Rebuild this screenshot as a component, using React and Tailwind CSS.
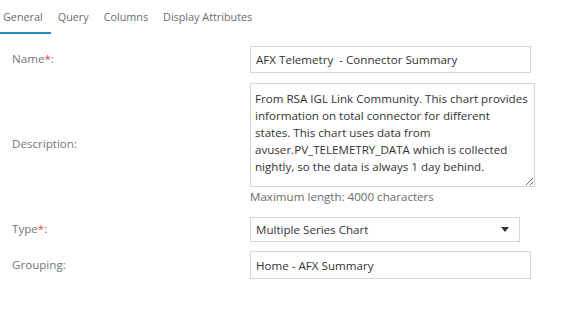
import { useState } from "react";

const tabs = ["General", "Query", "Columns", "Display Attributes"];

const description =
  "From RSA IGL Link Community. This chart provides\ninformation on total connector for different\nstates. This chart uses data from\navuser.PV_TELEMETRY_DATA which is collected\nnightly, so the data is always 1 day behind.";

function Label({ children, required }) {
  return (
    <label className="block text-[11.6px] text-[#767676] leading-[17px] -translate-y-[1px]">
      {children}
      {required && <span className="text-[#e8453c]">*</span>}:
    </label>
  );
}

export default function App() {
  const [active, setActive] = useState("General");
  const [name, setName] = useState("AFX Telemetry  - Connector Summary");
  const [desc, setDesc] = useState(description);
  const [group, setGroup] = useState("Home - AFX Summary");

  return (
    <div className="w-[572px] h-[309px] bg-white font-['Open_Sans',sans-serif] text-[#333]">
      <div className="flex items-start h-[34px]">
        {tabs.map((t, i) => {
          const on = t === active;
          return (
            <div
              key={t}
              onClick={() => setActive(t)}
              className={
                (i === 0 ? "pl-[3px] pr-[8px] " : "ml-[7px] pr-[8px] ") +
                "pt-[9px] pb-[8px] cursor-pointer text-[10.8px] leading-[15px] text-[#6b6b6b] " +
                (on ? "border-b-2 border-[#1e8fc0]" : "border-b-2 border-transparent")
              }
            >
              {t}
            </div>
          );
        })}
      </div>

      <div className="mt-[12px] pl-[12px] grid grid-cols-[238px_auto] items-center">
        <Label required>Name</Label>
        <input
          value={name}
          onChange={(e) => setName(e.target.value)}
          className="w-[281px] h-[27px] border border-[#d6d6d6] px-[5px] text-[11.6px] text-[#333] outline-none"
        />

        <div className="mt-[10px]">
          <Label>Description</Label>
        </div>
        <div className="mt-[10px] flex flex-col">
          <textarea
            value={desc}
            onChange={(e) => setDesc(e.target.value)}
            wrap="off"
            className="w-[285px] h-[104px] border border-[#d6d6d6] pl-[4px] pr-[2px] pt-[6px] text-[11.6px] leading-[17px] text-[#333] outline-none overflow-hidden"
          />
          <p className="mt-[1px] text-[11.6px] leading-[17px] text-[#6b6b6b]">Maximum length: 4000 characters</p>
        </div>

        <div className="mt-[12px]">
          <Label required>Type</Label>
        </div>
        <div className="mt-[12px] w-[270px] h-[25px] border border-[#d6d6d6] pl-[5px] pr-[10px] flex items-center justify-between text-[11.6px] text-[#333]">
          <span>Multiple Series Chart</span>
          <svg width="8" height="5" viewBox="0 0 8 5">
            <path d="M0 0H8L4 5Z" fill="#333" />
          </svg>
        </div>

        <div className="mt-[9px]">
          <Label>Grouping</Label>
        </div>
        <input
          value={group}
          onChange={(e) => setGroup(e.target.value)}
          className="mt-[9px] w-[281px] h-[28px] border border-[#d6d6d6] px-[5px] text-[11.6px] text-[#333] outline-none"
        />
      </div>
    </div>
  );
}
